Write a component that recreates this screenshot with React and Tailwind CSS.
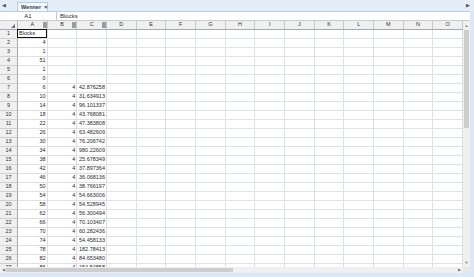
import React from "react";

const cols = "ABCDEFGHIJKLMNO".split("");

// rows of the sheet: [A, B, C]
const data = [
  ["Blocks", "", ""],
  ["4", "", ""],
  ["1", "", ""],
  ["51", "", ""],
  ["1", "", ""],
  ["0", "", ""],
  ["6", "4", "42.876258"],
  ["10", "4", "31.634913"],
  ["14", "4", "96.101337"],
  ["18", "4", "43.768081"],
  ["22", "4", "47.383808"],
  ["26", "4", "63.482609"],
  ["30", "4", "76.206742"],
  ["34", "4", "980.22609"],
  ["38", "4", "25.678349"],
  ["42", "4", "37.897364"],
  ["46", "4", "36.068136"],
  ["50", "4", "38.766197"],
  ["54", "4", "54.663006"],
  ["58", "4", "54.528945"],
  ["62", "4", "56.300494"],
  ["66", "4", "70.103407"],
  ["70", "4", "60.282436"],
  ["74", "4", "54.458133"],
  ["78", "4", "182.78413"],
  ["82", "4", "84.653480"],
  ["86", "4", "154.54858"],
];

const gridCols = "grid grid-cols-[18px_repeat(15,minmax(0,1fr))]";

function HeaderRow() {
  return (
    <div className={`${gridCols} h-[9px] shrink-0 bg-[#f0f0f0] border-b border-[#a8a8a8]`}>
      <div className="relative border-r border-[#b4b4b4]">
        <div className="absolute right-[2px] bottom-[1px] w-0 h-0 border-l-[4px] border-l-transparent border-b-[4px] border-b-[#6f6f6f]" />
      </div>
      {cols.map((c, i) => (
        <div
          key={c}
          className="relative flex items-center justify-center border-r border-[#c8c8c8] text-[#333] leading-none"
        >
          {c}
          {i < 3 && (
            <div className="absolute right-0 top-[1px] bottom-[1px] w-[4px] bg-[#9c9c9c]" />
          )}
        </div>
      ))}
    </div>
  );
}

function Row({ n, cells }) {
  return (
    <div className={`${gridCols} h-[9px] shrink-0`}>
      <div className="flex items-center justify-center bg-[#f0f0f0] border-r border-[#a8a8a8] border-b border-b-[#d0d0d0] text-[#333] leading-none">
        {n}
      </div>
      {cols.map((c, i) => {
        const v = i < 3 ? cells[i] : "";
        const selected = n === 1 && i === 0;
        return (
          <div
            key={c}
            className={`relative flex items-center leading-none whitespace-nowrap border-r border-b border-[#dde1e6] ${
              n === 1 ? "justify-start pl-[1px]" : "justify-end pr-[1px]"
            }`}
          >
            {v}
            {selected && (
              <div className="absolute -left-px -top-px right-0 bottom-0 border border-[#111]" />
            )}
          </div>
        );
      })}
    </div>
  );
}

export default function App() {
  return (
    <div className="w-[474px] h-[277px] bg-[#dbe8f6] flex flex-col overflow-hidden font-['Liberation_Sans',Arial,sans-serif] text-[5.5px] text-[#2a2a2a]">
      {/* tab strip */}
      <div className="h-[11px] shrink-0 flex items-end bg-[#e4eef9]">
        <div className="w-[17px] h-full flex items-center pl-[2px] text-[5px] text-[#555]">◀</div>
        <div className="h-[9px] w-[31px] flex items-center gap-[3px] pl-[3px] bg-[#f6f9fd] border border-b-0 border-[#b8cbe2] font-bold text-[#2b3a55] text-[5.5px]">
          <span>Wenner</span>
          <span className="text-[6px] font-bold">×</span>
        </div>
        <div className="flex-1" />
        <div className="w-[8px] h-full flex items-center text-[5px] text-[#555]">▶</div>
      </div>

      {/* sheet frame */}
      <div className="flex-1 flex flex-col bg-white mr-[4px] border-t border-[#b9cce3] min-h-0">
        {/* formula bar */}
        <div className="h-[9px] shrink-0 flex border-b border-[#c4ccd6] text-[6px]">
          <div className="w-[57px] flex items-center justify-center border-r border-[#c4ccd6]">A1</div>
          <div className="flex items-center pl-[3px]">Blocks</div>
        </div>

        {/* grid + vertical scroll */}
        <div className="flex-1 flex min-h-0">
          <div className="w-[463px] flex flex-col overflow-hidden">
            <HeaderRow />
            {data.map((cells, i) => (
              <Row key={i} n={i + 1} cells={cells} />
            ))}
          </div>
          <div className="w-[7px] flex flex-col bg-[#f0f0f0]">
            <div className="h-[9px] flex items-center justify-center text-[4px] text-[#777]">▲</div>
            <div className="h-[98px] mx-[1px] bg-[#cdcdcd]" />
            <div className="flex-1" />
            <div className="h-[8px] flex items-center justify-center text-[4px] text-[#777]">▼</div>
          </div>
        </div>

        {/* horizontal scroll */}
        <div className="h-[6px] shrink-0 flex bg-[#f0f0f0]">
          <div className="w-[6px] flex items-center justify-center text-[4px] text-[#777]">◀</div>
          <div className="w-[227px] my-[1px] bg-[#cdcdcd]" />
          <div className="flex-1" />
          <div className="w-[8px] flex items-center justify-center text-[4px] text-[#777]">▶</div>
          <div className="w-[7px] bg-[#e6e6e6]" />
        </div>
      </div>
      <div className="h-[4px] shrink-0" />
    </div>
  );
}
